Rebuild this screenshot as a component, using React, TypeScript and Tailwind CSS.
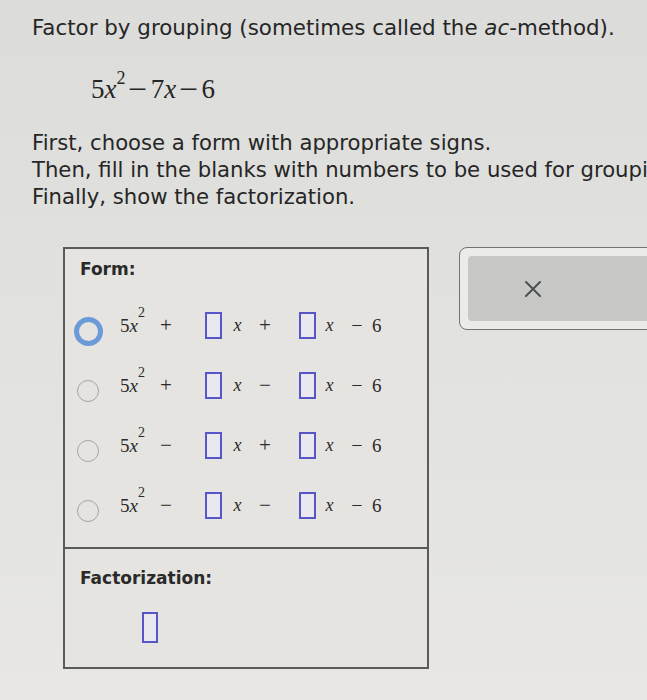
import React from "react";

const sans = "font-['DejaVu_Sans',Verdana,sans-serif]";
const serif = "font-['Liberation_Serif','Times_New_Roman',serif]";

type Sign = "+" | "−";

function Blank({ big = false }: { big?: boolean }) {
  return (
    <span
      className={
        big
          ? "block w-[16px] h-[31px] border-2 border-[#5656c8] bg-[#e9e8ee]"
          : "block w-[17px] h-[27px] border-2 border-[#5656c8] bg-[#e9e8ee]"
      }
    />
  );
}

function Radio({ selected }: { selected: boolean }) {
  return (
    <div className="w-[46px] flex justify-center mt-[12px]">
      {selected ? (
        <span className="block w-[29px] h-[29px] rounded-full border-[5px] border-[#6a9bd8]" />
      ) : (
        <span className="block w-[22px] h-[22px] rounded-full border-[1.5px] border-[#a5a5a2]" />
      )}
    </div>
  );
}

function FormRow({ first, second, selected }: { first: Sign; second: Sign; selected: boolean }) {
  return (
    <div className={`flex items-center h-[60px] text-[#2b2b2b] ${serif}`}>
      <Radio selected={selected} />
      <span className="w-[42px] pl-[9px] text-[19px] leading-none whitespace-nowrap">
        5<i>x</i>
        <span className="relative -top-[15px] text-[14px] not-italic">2</span>
      </span>
      <span className="w-[26px] text-center text-[21px] leading-none">{first}</span>
      <span className="ml-[26px]">
        <Blank />
      </span>
      <i className="ml-[5px] w-[21px] text-center text-[18px] leading-none">x</i>
      <span className="ml-[4px] w-[26px] text-center text-[21px] leading-none">{second}</span>
      <span className="ml-[21px]">
        <Blank />
      </span>
      <i className="ml-[3px] w-[21px] text-center text-[18px] leading-none">x</i>
      <span className="ml-[4px] w-[26px] text-center text-[20px] leading-none">−</span>
      <span className="ml-[2px] text-[19px] leading-none">6</span>
    </div>
  );
}

const rows: { first: Sign; second: Sign }[] = [
  { first: "+", second: "+" },
  { first: "+", second: "−" },
  { first: "−", second: "+" },
  { first: "−", second: "−" },
];

export default function App() {
  return (
    <div className="w-[647px] h-[700px] overflow-hidden bg-linear-to-b from-[#dcdcda] via-[#e2e2df] to-[#e8e7e3] text-[#262626]">
      <p className={`pt-[14px] pl-[32px] text-[21.4px] leading-[27px] whitespace-nowrap ${sans}`}>
        Factor by grouping (sometimes called the <i>ac</i>-method).
      </p>

      <div className={`mt-[33px] pl-[91px] text-[27px] leading-[30px] whitespace-nowrap ${serif}`}>
        5<i>x</i>
        <span className="relative -top-[14px] text-[18px]">2</span>
        <span className="inline-block mx-[5px] scale-x-125">−</span>
        7<i>x</i>
        <span className="inline-block mx-[5px] scale-x-125">−</span>6
      </div>

      <div className={`mt-[22px] pl-[32px] text-[21.2px] leading-[27px] whitespace-nowrap ${sans}`}>
        <p>First, choose a form with appropriate signs.</p>
        <p>Then, fill in the blanks with numbers to be used for grouping.</p>
        <p>Finally, show the factorization.</p>
      </div>

      <div className="mt-[37px] flex items-start">
        <div className="ml-[63px] w-[366px] shrink-0 border-2 border-[#5a5a5a] bg-[#e5e4e0]">
          <div className="pt-[10px] pb-[12px]">
            <div className={`pl-[15px] text-[17px] leading-[20px] font-bold text-[#2a2a2a] ${sans}`}>Form:</div>
            <div className="mt-[16px]">
              {rows.map((r, i) => (
                <FormRow key={i} first={r.first} second={r.second} selected={i === 0} />
              ))}
            </div>
          </div>
          <div className="border-t-2 border-[#5a5a5a] pt-[19px] pb-[24px] pl-[15px]">
            <div className={`text-[17px] leading-[20px] font-bold text-[#2a2a2a] ${sans}`}>Factorization:</div>
            <div className="mt-[24px] ml-[62px]">
              <Blank big />
            </div>
          </div>
        </div>

        <div className="ml-[30px] w-[220px] h-[83px] shrink-0 rounded-[8px] border-[1.5px] border-[#737373] bg-[#ebebe9] p-[8px]">
          <div className="h-full rounded-[4px] bg-[#c7c8c6] flex items-center pl-[56px]">
            <svg width="18" height="18" viewBox="0 0 18 18" fill="none" stroke="#4a5251" strokeWidth="2" strokeLinecap="round">
              <path d="M2 2 L16 16 M16 2 L2 16" />
            </svg>
          </div>
        </div>
      </div>
    </div>
  );
}
